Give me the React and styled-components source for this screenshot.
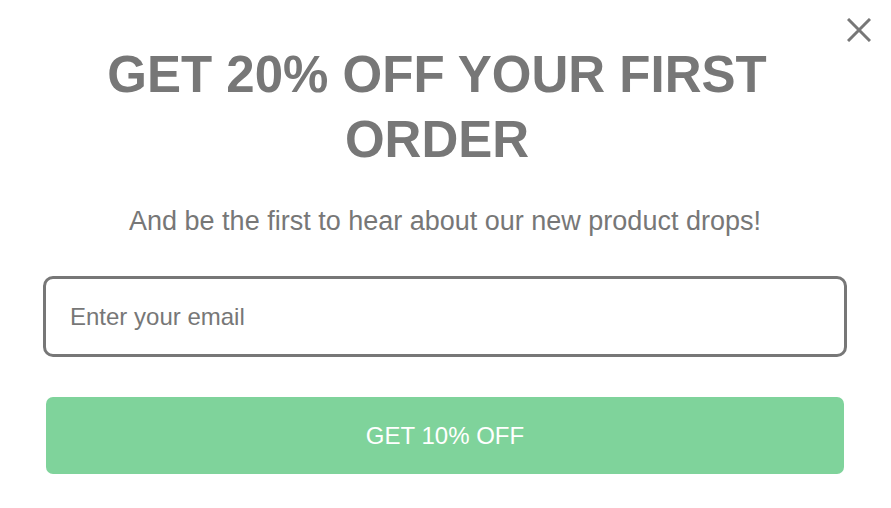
import React from "react";
import styled, { createGlobalStyle } from "styled-components";

const GlobalStyle = createGlobalStyle`
  html, body {
    margin: 0;
    padding: 0;
    background: #ffffff;
  }
  body {
    font-family: "Liberation Sans", Arial, sans-serif;
  }
`;

const Popup = styled.div`
  position: relative;
  width: 891px;
  height: 508px;
  box-sizing: border-box;
  padding: 42px 44px 0 43px;
  background: #fff;
  display: flex;
  flex-direction: column;
  align-items: stretch;
`;

const CloseButton = styled.button`
  position: absolute;
  top: 18px;
  right: 20px;
  width: 24px;
  height: 24px;
  padding: 0;
  border: none;
  background: none;
  cursor: pointer;
  display: flex;
`;

const Title = styled.h1`
  margin: 0;
  padding: 0 24px 0 8px;
  font-size: 51px;
  line-height: 65px;
  font-weight: 700;
  color: #777777;
  text-align: center;
`;

const Subtitle = styled.p`
  margin: 31px 0 0;
  font-size: 27px;
  line-height: 36px;
  color: #777777;
  text-align: center;
`;

const EmailInput = styled.input`
  margin-top: 37px;
  height: 81px;
  box-sizing: border-box;
  border: 3px solid #777777;
  border-radius: 10px;
  padding: 0 24px;
  font-family: inherit;
  font-size: 24px;
  color: #555;
  outline: none;
  &::placeholder {
    color: #777777;
  }
`;

const SubmitButton = styled.button`
  margin: 40px 3px 0;
  height: 77px;
  border: none;
  border-radius: 7px;
  background: #7fd39b;
  color: #ffffff;
  font-family: inherit;
  font-size: 24px;
  cursor: pointer;
`;

export default function App() {
  return (
    <>
      <GlobalStyle />
      <Popup>
        <CloseButton aria-label="Close">
          <svg width="24" height="24" viewBox="0 0 24 24">
            <path d="M1 1 L23 23 M23 1 L1 23" stroke="#777" strokeWidth="3" />
          </svg>
        </CloseButton>
        <Title>GET 20% OFF YOUR FIRST ORDER</Title>
        <Subtitle>And be the first to hear about our new product drops!</Subtitle>
        <EmailInput type="email" placeholder="Enter your email" />
        <SubmitButton>GET 10% OFF</SubmitButton>
      </Popup>
    </>
  );
}
